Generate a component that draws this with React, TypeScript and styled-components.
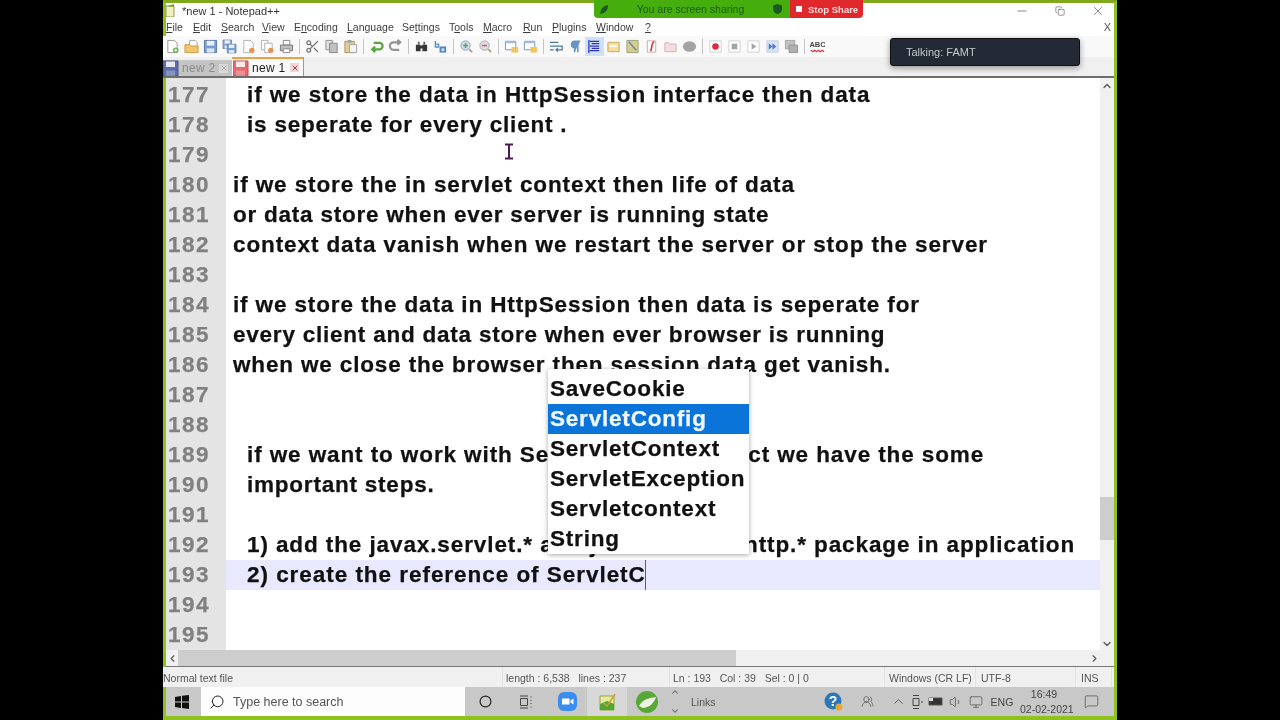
import React from "react";
import styled, { createGlobalStyle } from "styled-components";
import { Search, ChevronUp, ChevronDown, ChevronLeft, ChevronRight, Minus, X, Copy, Circle, Volume1, Monitor, MessageSquare, UsersRound, Scissors } from "lucide-react";

const GlobalStyle = createGlobalStyle`
  html, body { margin: 0; padding: 0; background: #000; }
  body { font-family: "Liberation Sans", Arial, sans-serif; }
`;

const Page = styled.div`
  width: 1280px;
  height: 720px;
  display: flex;
  justify-content: center;
  overflow: hidden;
  background: #000;
`;

const Screen = styled.div`
  position: relative;
  box-sizing: border-box;
  width: 954px;
  height: 720px;
  border-style: solid;
  border-color: #8dc21f;
  border-width: 3px 3px 4px 3px;
  border-top-color: #7fa81c;
  display: flex;
  flex-direction: column;
  background: #fff;
  filter: blur(0.4px);
`;

const TitleBar = styled.div`
  height: 15px;
  display: flex;
  align-items: center;
  gap: 7px;
  font-size: 11px;
  color: #333;
  white-space: nowrap;
`;

const WindowButtons = styled.div`
  margin-left: auto;
  margin-right: -3px;
  display: flex;
  color: #333;
  align-items: center;
`;

const WindowButton = styled.span`
  width: 38px;
  display: flex;
  justify-content: center;
`;

const MenuBar = styled.div`
  height: 18px;
  display: flex;
  align-items: center;
  font-size: 10.5px;
  color: #3c3c3c;
  white-space: nowrap;
`;

const MenuItem = styled.span<{ $w: number }>`
  width: ${(p) => p.$w}px;
  flex: none;
  u { text-underline-offset: 1px; }
`;

const MenuClose = styled.span`
  margin-left: auto;
  margin-right: 3px;
  font-size: 11px;
  color: #555;
`;

const Toolbar = styled.div`
  height: 21px;
  margin-left: -3px;
  display: flex;
  align-items: center;
  background: #f9f9f9;
  padding-right: 3px;
`;

const Slot = styled.div<{ $on?: boolean }>`
  width: 19px;
  height: 19px;
  flex: none;
  display: flex;
  align-items: center;
  justify-content: center;
  background: ${(p) => (p.$on ? "#c8e0f8" : "transparent")};
  opacity: 0.9;
`;

const Sep = styled.div`
  width: 1px;
  height: 15px;
  margin: 0 3px;
  flex: none;
  background: #c4c4c4;
`;

const TabBar = styled.div`
  height: 21px;
  margin-left: -3px;
  box-sizing: border-box;
  display: flex;
  align-items: flex-end;
  background: #f0f0f0;
  border-bottom: 2px solid #6e6e6e;
`;

const Tab = styled.div<{ $active?: boolean }>`
  box-sizing: border-box;
  height: ${(p) => (p.$active ? 19 : 16)}px;
  width: ${(p) => (p.$active ? 72 : 69)}px;
  display: flex;
  align-items: center;
  gap: 3px;
  font-size: 12px;
  letter-spacing: 0.3px;
  padding-left: ${(p) => (p.$active ? 1 : 0)}px;
  color: ${(p) => (p.$active ? "#222" : "#8a8a8a")};
  background: ${(p) => (p.$active ? "#fafafa" : "#c4c4c4")};
  border-top: ${(p) => (p.$active ? "2px solid #f0a040" : "none")};
  border-right: ${(p) => (p.$active ? "1px solid #999" : "none")};
`;

const TabClose = styled.span<{ $active?: boolean }>`
  margin-left: auto;
  margin-right: 4px;
  width: 9px;
  height: 9px;
  display: flex;
  align-items: center;
  justify-content: center;
  color: ${(p) => (p.$active ? "#a04050" : "#a8a8a8")};
  background: ${(p) => (p.$active ? "#f0d8d8" : "#d8d8d8")};
`;

const Editor = styled.div`
  flex: 1;
  min-height: 0;
  display: flex;
  overflow: hidden;
  font-weight: 700;
  font-size: 22.5px;
  line-height: 30px;
  -webkit-text-stroke: 0.25px currentColor;
`;

const Gutter = styled.div`
  width: 60px;
  flex: none;
  box-sizing: border-box;
  padding: 2px 0 0 2px;
  background: #e4e4e4;
  color: #808080;
  letter-spacing: 1.5px;
`;

const Lines = styled.div`
  flex: 1;
  min-width: 0;
  padding-top: 2px;
  color: #111;
  white-space: pre;
`;

const Line = styled.div<{ $indent?: boolean; $current?: boolean; $track?: number }>`
  height: 30px;
  padding-left: ${(p) => (p.$indent ? 21 : 7)}px;
  letter-spacing: ${(p) => p.$track ?? 0.9}px;
  background: ${(p) => (p.$current ? "#e8e8ff" : "transparent")};
`;

const Caret = styled.span`
  display: inline-block;
  width: 1px;
  height: 30px;
  margin-left: -0.5px;
  vertical-align: top;
  background: #7a4a90;
`;

const VScroll = styled.div`
  width: 14px;
  flex: none;
  box-sizing: border-box;
  padding-top: 2px;
  display: flex;
  flex-direction: column;
  align-items: center;
  background: #f0f0f0;
  color: #555;
`;

const VThumb = styled.div`
  width: 100%;
  height: 43px;
  margin: 405px 0 auto;
  background: #cdcdcd;
`;

const HScroll = styled.div`
  height: 16px;
  flex: none;
  display: flex;
  align-items: center;
  background: #f0f0f0;
  color: #555;
  border-bottom: 1px solid #777;
`;

const HThumb = styled.div`
  width: 558px;
  height: 100%;
  background: #cdcdcd;
`;

const HArrow = styled.div<{ $end?: boolean }>`
  width: 12px;
  flex: none;
  display: flex;
  justify-content: center;
  margin-left: ${(p) => (p.$end ? "auto" : "0")};
  margin-right: ${(p) => (p.$end ? "14px" : "0")};
`;

const StatusBar = styled.div`
  height: 20px;
  flex: none;
  display: flex;
  align-items: center;
  background: #f0f0f0;
  font-size: 10.5px;
  color: #555;
  white-space: nowrap;
  margin-left: -3px;
`;

const StatusCell = styled.div<{ $w: number; $pad?: number }>`
  width: ${(p) => p.$w}px;
  flex: none;
  box-sizing: border-box;
  padding-left: ${(p) => p.$pad ?? 3}px;
  height: 100%;
  line-height: 22px;
  border-right: 1px solid #e2e2e2;
`;

const Taskbar = styled.div`
  height: 29px;
  flex: none;
  display: flex;
  align-items: center;
  background: #c8c8c8;
  color: #333;
  font-size: 10.5px;
`;

const StartButton = styled.div`
  width: 35px;
  flex: none;
  display: flex;
  justify-content: center;
  padding-right: 3px;
  box-sizing: border-box;
`;

const SearchBox = styled.div`
  width: 264px;
  height: 100%;
  flex: none;
  box-sizing: border-box;
  display: flex;
  align-items: center;
  gap: 8px;
  padding: 1px 0 0 8px;
  background: #fdfdfd;
  color: #555;
  font-size: 12.5px;
`;

const TaskTile = styled.div<{ $active?: boolean; $w?: number }>`
  width: ${(p) => p.$w ?? 40}px;
  height: 100%;
  flex: none;
  display: flex;
  align-items: center;
  justify-content: center;
  background: ${(p) => (p.$active ? "#d8d8d8" : "transparent")};
`;

const Stepper = styled.div`
  width: 16px;
  height: 100%;
  flex: none;
  display: flex;
  flex-direction: column;
  align-items: center;
  justify-content: space-between;
  color: #666;
`;

const LinksLabel = styled.span`
  margin-left: 8px;
  font-size: 10.5px;
  color: #555;
`;

const Tray = styled.div`
  margin-left: auto;
  display: flex;
  align-items: center;
  height: 100%;
  color: #444;
`;

const TrayItem = styled.div<{ $w: number }>`
  width: ${(p) => p.$w}px;
  flex: none;
  display: flex;
  align-items: center;
  justify-content: center;
`;

const Clock = styled.div`
  width: 48px;
  flex: none;
  text-align: center;
  font-size: 10.5px;
  line-height: 15px;
  white-space: nowrap;
  color: #444;
`;

const ShareBanner = styled.div`
  position: absolute;
  top: -3px;
  left: 428px;
  height: 18px;
  display: flex;
  font-size: 10.5px;
  line-height: 17px;
  white-space: nowrap;
`;

const SharePill = styled.div`
  width: 196px;
  box-sizing: border-box;
  padding: 0 8px 0 6px;
  display: flex;
  align-items: center;
  justify-content: space-between;
  background: #45ad0c;
  color: #1d5a1d;
  border-radius: 0 0 0 4px;
`;

const StopPill = styled.div`
  width: 73px;
  box-sizing: border-box;
  padding-left: 6px;
  display: flex;
  align-items: center;
  gap: 6px;
  background: #e0282c;
  color: #fbdcdc;
  font-weight: 700;
  font-size: 9.5px;
  border-radius: 0 0 4px 0;
`;

const StopSquare = styled.span`
  width: 6px;
  height: 6px;
  background: #fff;
`;

const TalkingToast = styled.div`
  position: absolute;
  left: 724px;
  top: 35px;
  width: 190px;
  height: 28px;
  box-sizing: border-box;
  padding-left: 15px;
  line-height: 27px;
  font-size: 11px;
  color: #c5c8cc;
  background: #232a36;
  border: 1px solid #111;
  border-radius: 3px;
  box-shadow: 0 2px 6px rgba(0, 0, 0, 0.4);
`;

const Popup = styled.div`
  position: absolute;
  left: 382px;
  top: 366px;
  width: 201px;
  box-sizing: border-box;
  padding-top: 5px;
  background: #fff;
  box-shadow: 0 1px 5px rgba(0, 0, 0, 0.35);
  font-weight: 700;
  font-size: 22.5px;
  letter-spacing: 0.8px;
  -webkit-text-stroke: 0.25px currentColor;
  color: #111;
`;

const PopupRow = styled.div<{ $selected?: boolean }>`
  height: 30px;
  line-height: 30px;
  padding-left: 2px;
  white-space: nowrap;
  color: ${(p) => (p.$selected ? "#f0f6ff" : "#111")};
  background: ${(p) => (p.$selected ? "#0a74d8" : "transparent")};
`;

const MouseCursor = styled.svg`
  position: absolute;
  left: 338px;
  top: 140px;
`;

const MENUS: [React.ReactNode, number][] = [
  [<><u>F</u>ile</>, 27],
  [<><u>E</u>dit</>, 28],
  [<><u>S</u>earch</>, 41],
  [<><u>V</u>iew</>, 32],
  [<>E<u>n</u>coding</>, 53],
  [<><u>L</u>anguage</>, 55],
  [<>Se<u>t</u>tings</>, 47],
  [<>T<u>o</u>ols</>, 34],
  [<><u>M</u>acro</>, 40],
  [<><u>R</u>un</>, 29],
  [<><u>P</u>lugins</>, 44],
  [<><u>W</u>indow</>, 49],
  [<><u>?</u></>, 12],
];

const page = (s = "#8a8a8a") => <path d="M3 1.500h7l3 3v10H3z" fill="#fff" stroke={s} />;
const dot = (c: string) => <circle cx="11.500" cy="12" r="2.800" fill={c} />;
const floppy = (c: string, x = 0, y = 0, s = 1) => (
  <g transform={`translate(${x} ${y}) scale(${s})`}>
    <path d="M1.500 1.500h13v13h-13z" fill={c} stroke="#4a6a9a" />
    <path d="M4 2h8v5H4z" fill="#e8f0fa" />
    <path d="M4 10h8v4.500H4z" fill="#fff" opacity=".75" />
  </g>
);

const TOOL_ICONS: Record<string, React.ReactNode> = {
  new: <>{page()}<circle cx="11.500" cy="12" r="3" fill="#6aa84f" /><path d="M10 12h3M11.500 10.500v3" stroke="#fff" /></>,
  open: <><path d="M6 1.500h6l2 2v5H6z" fill="#fff" stroke="#999" /><path d="M1 6h5l1.500 1.500H15V14.500H1z" fill="#f0c060" stroke="#c09030" /></>,
  save: floppy("#6a94d0"),
  saveAll: <>{floppy("#7aa0d0", 0, 0, 0.7)}{floppy("#6a94d0", 4.500, 4.500, 0.72)}</>,
  close: <>{page("#aaa")}{dot("#e8883a")}</>,
  closeAll: <><path d="M1.500 1.500h7v10h-7z" fill="#fff" stroke="#aaa" /><path d="M5 4.500h8v10H5z" fill="#fff" stroke="#aaa" />{dot("#e8883a")}</>,
  print: <><path d="M4.500 1.500h7v5h-7z" fill="#fff" stroke="#777" /><path d="M1.500 6.500h13v6h-13z" fill="#b8b8c0" stroke="#666" /><path d="M4.500 10.500h7v4h-7z" fill="#fff" stroke="#777" /></>,
  copy: <><path d="M2 1.500h7v10H2z" fill="#ddd" stroke="#888" /><path d="M6 4.500h8v10H6z" fill="#bbb" stroke="#777" /></>,
  paste: <><path d="M2 2.500h10v12H2z" fill="#e0c890" stroke="#a08850" /><path d="M5 1h4v3H5z" fill="#999" /><path d="M7 6h7.500v8.500H7z" fill="#f4f4f4" stroke="#999" /></>,
  undo: <path d="M5 4h6a3.500 3.500 0 0 1 0 7H4M6.500 8L3.500 11l3 3" fill="none" stroke="#4a9a30" strokeWidth="2.400" />,
  redo: <path d="M12 3.500H6a4 4 0 0 0 0 8h6M10 1l3 2.500-3 2.500" fill="none" stroke="#8a8a8a" strokeWidth="2.400" />,
  find: <><path d="M2 6h5v7H2zM9 6h5v7H9zM6.500 7h3v3h-3z" fill="#222" /><path d="M4 3h2v3H4zM10 3h2v3h-2z" fill="#555" /></>,
  replace: <><path d="M2.500 2v6.500h3.500v-3h-3" fill="none" stroke="#4a80c0" strokeWidth="1.400" /><path d="M7 8h7v6.500H7z" fill="#3a7ac0" /><path d="M9 10h3v3H9z" fill="#cfe0f4" /></>,
  zoomIn: <><circle cx="7" cy="7" r="5" fill="#c8d8e8" stroke="#8aa0b8" /><path d="M4.500 7h5M7 4.500v5" stroke="#4a9a40" strokeWidth="1.600" /><path d="M11 11l3 3" stroke="#b09060" strokeWidth="2" /></>,
  zoomOut: <><circle cx="7" cy="7" r="5" fill="#d8d8e0" stroke="#a0a0b0" /><path d="M4.500 7h5" stroke="#d04040" strokeWidth="1.600" /><path d="M11 11l3 3" stroke="#b09060" strokeWidth="2" /></>,
  syncV: <><path d="M1.500 2.500h11v9h-11z" fill="#fff" stroke="#6a8ab0" /><path d="M1.500 2.500h11v2h-11z" fill="#9ab8d8" /><path d="M8 8.500h7v6H8z" fill="#f0c050" /></>,
  wrap: <path d="M1 3.500h9M1 7.500h13v4H8M1 11.500h4M9.500 9.500L7.500 11.500l2 2" fill="none" stroke="#3a6a9a" strokeWidth="1.300" />,
  para: <path d="M7 14V2.500h6M10.500 2.500V14M7 2.500a3.200 3.200 0 0 0 0 6.500" fill="#5a8ab8" stroke="#5a8ab8" strokeWidth="1.600" />,
  guide: <path d="M3 2.500h10M5 5h8M3 7.500h10M5 10h8M3 12.500h10M2 1v14" stroke="#1a1ab0" strokeWidth="1.300" fill="none" />,
  folderDoc: <><path d="M2 3.500h12v10H2z" fill="#f4dc90" stroke="#c0a050" /><path d="M4 6.500h8v2H4z" fill="#fff" /></>,
  map: <><path d="M2 1.500h12v13H2z" fill="#d8c880" stroke="#8a9a70" /><path d="M4 3l8 9" stroke="#5a7ab0" strokeWidth="1.500" /></>,
  funcList: <><path d="M3.500 2h9v12h-9z" fill="#fff" stroke="#c8a0a0" /><path d="M11 3C8 3 9 9 7 13" fill="none" stroke="#c03030" strokeWidth="1.800" /></>,
  folderPink: <path d="M2 4h4l1 1.500h7v8H2z" fill="#f4d8dc" stroke="#d8a8b0" />,
  monitor: <ellipse cx="8" cy="8" rx="7" ry="5.500" fill="#9a9a9a" />,
  record: <><path d="M2 2h12v12H2z" fill="#fff" stroke="#ccc" /><circle cx="8" cy="8" r="3.500" fill="#d81830" /></>,
  stop: <><path d="M2 2h12v12H2z" fill="#fff" stroke="#ccc" /><path d="M5 5h6v6H5z" fill="#9a9a9a" /></>,
  play: <><path d="M2 2h12v12H2z" fill="#fff" stroke="#ccc" /><path d="M6 4.500l5 3.500-5 3.500z" fill="#9a9a9a" /></>,
  playAll: <><path d="M2 2h12v12H2z" fill="#d8e4f4" stroke="#b8c8e0" /><path d="M4 4.500l4 3.500-4 3.500zM8 4.500l4 3.500-4 3.500z" fill="#3a6ac0" /></>,
  saveMacro: <><path d="M1.500 1.500h10v9h-10z" fill="#bbb" stroke="#999" /><path d="M5.500 6.500h9v8h-9z" fill="#a8a8a8" stroke="#888" /></>,
  spell: <><text x="8" y="9" fontSize="8" fontWeight="700" textAnchor="middle" fill="#333" fontFamily="Liberation Sans">ABC</text><path d="M1 12l2 1.500 2-1.500 2 1.500 2-1.500 2 1.500 2-1.500 2 1.500" fill="none" stroke="#d02020" strokeWidth="1.300" /></>,
};

const TOOLBAR = [
  "new", "open", "save", "saveAll", "close", "closeAll", "print", "|",
  "cut", "copy", "paste", "|", "undo", "redo", "|", "find", "replace", "|",
  "zoomIn", "zoomOut", "|", "syncV", "syncV", "|", "wrap", "para", "guide",
  "folderDoc", "map", "funcList", "folderPink", "monitor", "|",
  "record", "stop", "play", "playAll", "saveMacro", "|", "spell",
];

const ToolIcon = ({ kind }: { kind: string }) =>
  kind === "cut" ? (
    <Scissors size={15} color="#666" strokeWidth={2} />
  ) : (
    <svg width="15" height="15" viewBox="0 0 16 16">
      {TOOL_ICONS[kind]}
    </svg>
  );

const TabFloppy = ({ color, edge }: { color: string; edge: string }) => (
  <svg width="16" height="16" viewBox="0 0 16 16">
    <path d="M0 1h15v15H0z" fill={color} stroke={edge} />
    <path d="M3 1.500h9v5.500H3z" fill="#fff" opacity=".85" />
    <path d="M3 10.500h9V16H3z" fill="#fff" opacity=".25" />
  </svg>
);

const NUMBERS = Array.from({ length: 19 }, (_, i) => 177 + i);

const LINES: { text: string; indent?: boolean; track?: number }[] = [
  { text: "if we store the data in HttpSession interface then data", indent: true },
  { text: "is seperate for every client .", indent: true, track: 0.8 },
  { text: "" },
  { text: "if we store the in servlet context then life of data" },
  { text: "or data store when ever server is running state", track: 0.77 },
  { text: "context data vanish when we restart the server or stop the server" },
  { text: "" },
  { text: "if we store the data in HttpSession then data is seperate for", track: 0.87 },
  { text: "every client and data store when ever browser is running", track: 0.775 },
  { text: "when we close the browser then session data get vanish.", track: 0.845 },
  { text: "" },
  { text: "" },
  { text: "if we want to work with ServletContext object we have the some", indent: true },
  { text: "important steps.", indent: true, track: 0.78 },
  { text: "" },
  { text: "1) add the javax.servlet.* and javax.servlet.http.* package in application", indent: true },
];

const COMPLETIONS = ["SaveCookie", "ServletConfig", "ServletContext", "ServletException", "Servletcontext", "String"];

export default function App() {
  return (
    <Page>
      <GlobalStyle />
      <Screen>
        <TitleBar>
          <svg width="9" height="13" viewBox="0 0 9 13">
            <path d="M0 2h8v11H0z" fill="#f4f0c0" stroke="#8a9a50" />
            <path d="M1 2l7-2v3z" fill="#7aa030" />
          </svg>
          *new 1 - Notepad++
          <WindowButtons>
            <WindowButton><Minus size={14} strokeWidth={1} /></WindowButton>
            <WindowButton><Copy size={10} strokeWidth={1.2} /></WindowButton>
            <WindowButton><X size={14} strokeWidth={1} /></WindowButton>
          </WindowButtons>
        </TitleBar>
        <MenuBar>
          {MENUS.map(([label, w], i) => (
            <MenuItem key={i} $w={w}>{label}</MenuItem>
          ))}
          <MenuClose>X</MenuClose>
        </MenuBar>
        <Toolbar>
          {TOOLBAR.map((kind, i) =>
            kind === "|" ? (
              <Sep key={i} />
            ) : (
              <Slot key={i} $on={kind === "guide"}>
                <ToolIcon kind={kind} />
              </Slot>
            )
          )}
        </Toolbar>
        <TabBar>
          <Tab>
            <TabFloppy color="#5a6ea8" edge="#46568a" />
            new 2
            <TabClose><X size={8} strokeWidth={3} /></TabClose>
          </Tab>
          <Tab $active>
            <TabFloppy color="#e86a70" edge="#c84a50" />
            new 1
            <TabClose $active><X size={8} strokeWidth={3} /></TabClose>
          </Tab>
        </TabBar>
        <Editor>
          <Gutter>
            {NUMBERS.map((n) => (
              <div key={n}>{n}</div>
            ))}
          </Gutter>
          <Lines>
            {LINES.map((l, i) => (
              <Line key={i} $indent={l.indent} $track={l.track}>{l.text}</Line>
            ))}
            <Line $indent $current $track={0.96}>
              2) create the reference of ServletC<Caret />
            </Line>
          </Lines>
          <VScroll>
            <ChevronUp size={12} strokeWidth={2.5} />
            <VThumb />
            <ChevronDown size={12} strokeWidth={2.5} />
          </VScroll>
        </Editor>
        <HScroll>
          <HArrow><ChevronLeft size={11} strokeWidth={2.5} /></HArrow>
          <HThumb />
          <HArrow $end><ChevronRight size={11} strokeWidth={2.5} /></HArrow>
        </HScroll>
        <StatusBar>
          <StatusCell $w={340} $pad={0}>Normal text file</StatusCell>
          <StatusCell $w={167} $pad={3}>length : 6,538 &nbsp; lines : 237</StatusCell>
          <StatusCell $w={215} $pad={3}>Ln : 193 &nbsp; Col : 39 &nbsp; Sel : 0 | 0</StatusCell>
          <StatusCell $w={91} $pad={4}>Windows (CR LF)</StatusCell>
          <StatusCell $w={100} $pad={5}>UTF-8</StatusCell>
          <StatusCell $w={36} $pad={5}>INS</StatusCell>
        </StatusBar>
        <Taskbar>
          <StartButton>
            <svg width="14" height="14" viewBox="0 0 14 14" fill="#111">
              <path d="M0 2l6-1v5.500H0zM7 .8L14 0v6.500H7zM0 7.500h6V13l-6-1zM7 7.500h7V14l-7-.9z" />
            </svg>
          </StartButton>
          <SearchBox>
            <Search size={16} strokeWidth={1.5} color="#222" style={{ transform: "scaleX(-1)" }} />
            Type here to search
          </SearchBox>
          <TaskTile><Circle size={13} strokeWidth={2.2} color="#222" /></TaskTile>
          <TaskTile $w={42}>
            <svg width="14" height="14" viewBox="0 0 14 14" fill="none" stroke="#444">
              <path d="M1 1h8M1 13h8M1.500 3.500h7v7h-7zM12 1.500v1M12 5v1M12 8v1M12 11.500v1" />
            </svg>
          </TaskTile>
          <TaskTile $w={40}>
            <svg width="19" height="19" viewBox="0 0 19 19">
              <rect width="19" height="19" rx="6" fill="#3a8cf0" />
              <path d="M4 6.500h7.500v6H4zM12.500 8.500l3-2v6l-3-2z" fill="#fff" />
            </svg>
          </TaskTile>
          <TaskTile $active $w={40}>
            <svg width="19" height="19" viewBox="0 0 19 19">
              <path d="M2 4h14v14H2z" fill="#e8e8a0" stroke="#90a840" />
              <path d="M2 12l7-3 7 3v6H2z" fill="#50a830" />
              <path d="M6 11l3 3 8-12" fill="none" stroke="#c8a030" strokeWidth="1.500" />
            </svg>
          </TaskTile>
          <TaskTile $w={40}>
            <svg width="22" height="22" viewBox="0 0 22 22">
              <circle cx="11" cy="11" r="11" fill="#58a838" />
              <path d="M3 15C7 8 13 7 20 6c-2 6-6 10-13 11z" fill="#eef4e4" />
            </svg>
          </TaskTile>
          <Stepper>
            <ChevronUp size={10} strokeWidth={2.5} />
            <ChevronDown size={10} strokeWidth={2.5} />
          </Stepper>
          <LinksLabel>Links</LinksLabel>
          <Tray>
            <TrayItem $w={30}>
              <svg width="19" height="19" viewBox="0 0 19 19">
                <circle cx="9" cy="9" r="8.500" fill="#2a78b8" />
                <text x="9" y="14" fontSize="14" fontWeight="700" textAnchor="middle" fill="#fff" fontFamily="Liberation Sans">?</text>
                <circle cx="15" cy="15" r="3.500" fill="#e8a830" />
              </svg>
            </TrayItem>
            <TrayItem $w={38}><UsersRound size={13} strokeWidth={1.2} /></TrayItem>
            <TrayItem $w={24}><ChevronUp size={15} strokeWidth={1.3} /></TrayItem>
            <TrayItem $w={16}>
              <svg width="12" height="14" viewBox="0 0 12 14" fill="none" stroke="#444">
                <path d="M1 .5h6M1 13.500h6M1 3.500h6v7H1zM9 7h2" />
              </svg>
            </TrayItem>
            <TrayItem $w={18}>
              <svg width="15" height="9" viewBox="0 0 15 9">
                <path d="M1 1h13v7H1z" fill="#333" stroke="#555" />
                <path d="M1 1h4v3H1z" fill="#ddd" />
              </svg>
            </TrayItem>
            <TrayItem $w={24}><Volume1 size={14} strokeWidth={1.2} /></TrayItem>
            <TrayItem $w={16}><Monitor size={14} strokeWidth={1.1} /></TrayItem>
            <TrayItem $w={36}>ENG</TrayItem>
            <Clock>16:49<br />02-02-2021</Clock>
            <TrayItem $w={46}><MessageSquare size={15} strokeWidth={1.1} /></TrayItem>
          </Tray>
        </Taskbar>
        <ShareBanner>
          <SharePill>
            <svg width="8" height="9" viewBox="0 0 8 9"><path d="M0 9C1 3 3 1 8 0 8 5 6 8 0 9z" fill="#1d5a1d" /></svg>
            You are screen sharing
            <svg width="9" height="10" viewBox="0 0 9 10"><path d="M4.500 0L9 1.500V5C9 8 6.500 9.500 4.500 10 2.500 9.500 0 8 0 5V1.500z" fill="#1d5a1d" /></svg>
          </SharePill>
          <StopPill>
            <StopSquare />
            Stop Share
          </StopPill>
        </ShareBanner>
        <TalkingToast>Talking: FAMT</TalkingToast>
        <Popup>
          {COMPLETIONS.map((c) => (
            <PopupRow key={c} $selected={c === "ServletConfig"}>{c}</PopupRow>
          ))}
        </Popup>
        <MouseCursor width="10" height="17" viewBox="0 0 10 17">
          <path d="M1 1.500h8M1 15.500h8M5 1.500v14" stroke="#4a1a50" strokeWidth="2" fill="none" />
        </MouseCursor>
      </Screen>
    </Page>
  );
}
